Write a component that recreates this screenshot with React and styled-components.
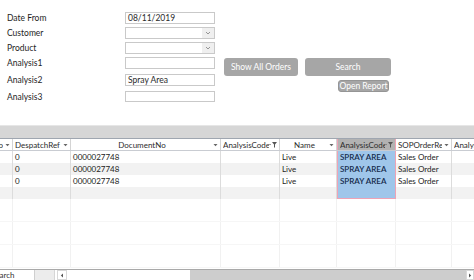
import React from "react";
import styled, { createGlobalStyle, css } from "styled-components";

const GlobalStyle = createGlobalStyle`
  html, body { margin: 0; padding: 0; background: #ffffff; }
  body { font-family: Lato, "Liberation Sans", sans-serif; }
  * { box-sizing: border-box; }
`;

const Page = styled.div`
  width: 474px;
  height: 280px;
  overflow: hidden;
  display: flex;
  flex-direction: column;
  background: #fff;
`;

const Form = styled.div`
  display: flex;
  height: 125px;
  padding: 12px 0 0 7px;
  flex: none;
`;

const FieldGrid = styled.div`
  display: grid;
  grid-template-columns: 118px 90px;
  grid-template-rows: 15px 15px 15px 17px 17px 12px;
  align-items: start;
`;

const Label = styled.div`
  font-size: 8.5px;
  line-height: 12px;
  color: #1e1e1e;
  white-space: nowrap;
`;

const Input = styled.div`
  height: ${(p) => (p.$short ? 11 : 12)}px;
  border: 1px solid #c9c9c9;
  background: #fff;
  display: flex;
  align-items: center;
  font-size: 8.5px;
  color: #2a2a2a;
  padding-left: 2px;
`;

const Combo = styled(Input)`
  padding-left: 0;
  justify-content: flex-end;
`;

const ComboArrow = styled.div`
  width: 12px;
  height: 100%;
  background: #efefef;
  display: flex;
  align-items: center;
  justify-content: center;
`;

const ButtonPanel = styled.div`
  margin-left: 9px;
  padding-top: 46px;
  display: flex;
  flex-direction: column;
  align-items: flex-end;
  gap: 4px;
`;

const ButtonRow = styled.div`
  display: flex;
  gap: 7px;
`;

const Button = styled.div`
  width: ${(p) => p.$w}px;
  height: ${(p) => p.$h}px;
  background: #a6a6a6;
  border-radius: 3px;
  color: #fff;
  font-size: ${(p) => p.$fs || 8.5}px;
  display: flex;
  align-items: center;
  justify-content: center;
  white-space: nowrap;
  overflow: hidden;
  ${(p) =>
    p.$outlined &&
    css`
      border: 1px solid #959595;
      margin-right: 2px;
    `}
`;

const Sheet = styled.div`
  flex: 1;
  display: flex;
  flex-direction: column;
  min-height: 0;
`;

const Band = styled.div`
  height: 13px;
  background: #d6d6d6;
  border-top: 1px solid #e6e6e6;
  flex: none;
`;

const Row = styled.div`
  display: flex;
  flex: none;
  height: ${(p) => p.$h || 12}px;
  background: ${(p) => (p.$alt ? "#f2f2f2" : "#ffffff")};
`;

const HeaderRow = styled(Row)`
  height: 13px;
  background: #fff;
  border-top: 1px solid #9fa6b0;
  border-bottom: 1px solid #c9ccd2;
`;

const HeadCell = styled.div`
  width: ${(p) => p.$w}px;
  flex: none;
  display: flex;
  align-items: center;
  justify-content: ${(p) => (p.$end ? "flex-end" : "flex-start")};
  overflow: hidden;
  padding: 0 2px 0 2px;
  border-right: 1px solid #d4d4d4;
  font-size: 8px;
  color: #2c2c2c;
  ${(p) =>
    p.$sel &&
    css`
      background: #b2b2b2;
      border-left: 1px solid #eea3b5;
      border-right: 1px solid #eea3b5;
    `}
`;

const HeadText = styled.span`
  white-space: nowrap;
  overflow: hidden;
  flex: ${(p) => (p.$end ? "none" : "1")};
  min-width: 0;
  text-align: ${(p) => (p.$center ? "center" : "left")};
`;

const Cell = styled.div`
  width: ${(p) => p.$w}px;
  flex: none;
  overflow: hidden;
  white-space: nowrap;
  padding-left: 2px;
  font-size: 8px;
  line-height: 12px;
  color: #222;
  border-right: 1px solid ${(p) => (p.$faint ? "#f1f1f1" : "#dcdcdc")};
  ${(p) =>
    p.$sel &&
    css`
      background: #9fc6ea;
      color: #142a4a;
      border-left: 1px solid #eea3b5;
      border-right: 1px solid #eea3b5;
      font-weight: 600;
    `}
  ${(p) =>
    p.$selLast &&
    css`
      border-bottom: 1px solid #eea3b5;
    `}
`;

const Filler = styled.div`
  flex: 1;
  display: flex;
  flex-direction: column;
`;

const FillerRow = styled(Row)`
  border-bottom: 1px solid #f6f6f6;
  height: 23px;
`;

const BottomBar = styled.div`
  height: 11px;
  flex: none;
  border-top: 1px solid #a9a9a9;
  display: flex;
  align-items: stretch;
  background: #fff;
`;

const SearchBox = styled.div`
  width: 35px;
  overflow: hidden;
  font-size: 8px;
  line-height: 10px;
  color: #333;
  border-right: 1px solid #cfcfcf;
  white-space: nowrap;
`;

const SearchText = styled.span`
  display: inline-block;
  margin-left: -9px;
`;

const GrayBox = styled.div`
  width: 20px;
  background: #ececec;
  border-right: 1px solid #d6d6d6;
`;

const Scroll = styled.div`
  flex: 1;
  display: flex;
  margin-left: 2px;
  background: #cdcdcd;
`;

const ScrollBtn = styled.div`
  width: ${(p) => p.$w || 10}px;
  background: #fff;
  border: 1px solid #d8d8d8;
  display: flex;
  align-items: center;
  justify-content: center;
  flex: none;
`;

const Thumb = styled.div`
  width: 123px;
  background: #fff;
  flex: none;
`;

const Track = styled.div`
  flex: 1;
`;

const Arrow = () => (
  <svg width="5" height="4" viewBox="0 0 5 4" style={{ flex: "none", marginLeft: 2 }}>
    <path d="M0.5 1 L4.5 1 L2.5 3.2 Z" fill="#666" />
  </svg>
);

const FilterIcon = () => (
  <svg width="8" height="7" viewBox="0 0 8 7" style={{ flex: "none" }}>
    <path d="M0 3 L2 3 L1 4.2 Z" fill="#666" />
    <path d="M3 1 L8 1 L6 3.6 L6 6.2 L5 6.8 L5 3.6 Z" fill="#555" />
  </svg>
);

const SmallChevron = () => (
  <svg width="6" height="4" viewBox="0 0 6 4">
    <path d="M1 1 L3 3 L5 1" stroke="#8a8a8a" strokeWidth="0.9" fill="none" />
  </svg>
);

const Tri = ({ dir }) => (
  <svg width="4" height="5" viewBox="0 0 4 5">
    {dir === "left" ? (
      <path d="M3 0.5 L3 4.5 L0.8 2.5 Z" fill="#555" />
    ) : (
      <path d="M1 0.5 L1 4.5 L3.2 2.5 Z" fill="#555" />
    )}
  </svg>
);

const columns = [
  { w: 13, head: "No", end: true, icon: "arrow" },
  { w: 58, head: "DespatchRef", icon: "arrow" },
  { w: 150, head: "DocumentNo", center: true, icon: "arrow" },
  { w: 59, head: "AnalysisCode1", icon: "filter" },
  { w: 57, head: "Name", center: true, icon: "arrow" },
  { w: 59, head: "AnalysisCode2", icon: "filter", sel: true },
  { w: 56, head: "SOPOrderRef", icon: "arrow" },
  { w: 40, head: "Analysis3", icon: "arrow" },
];

const dataRow = ["", "0", "0000027748", "", "Live", "SPRAY AREA", "Sales Order", ""];
const rows = [dataRow, dataRow, dataRow, ["", "", "", "", "", "", "", ""]];

const fields = [
  { label: "Date From", value: "08/11/2019" },
  { label: "Customer", combo: true },
  { label: "Product", combo: true },
  { label: "Analysis1" },
  { label: "Analysis2", value: "Spray Area" },
  { label: "Analysis3", short: true },
];

export default function App() {
  return (
    <>
      <GlobalStyle />
      <Page>
        <Form>
          <FieldGrid>
            {fields.map((f) => (
              <React.Fragment key={f.label}>
                <Label>{f.label}</Label>
                {f.combo ? (
                  <Combo>
                    <ComboArrow>
                      <SmallChevron />
                    </ComboArrow>
                  </Combo>
                ) : (
                  <Input $short={f.short}>{f.value || ""}</Input>
                )}
              </React.Fragment>
            ))}
          </FieldGrid>
          <ButtonPanel>
            <ButtonRow>
              <Button $w={74} $h={18}>Show All Orders</Button>
              <Button $w={86} $h={18}>Search</Button>
            </ButtonRow>
            <Button $w={51} $h={12} $fs={8.5} $outlined>Open Report</Button>
          </ButtonPanel>
        </Form>
        <Sheet>
          <Band />
          <HeaderRow>
            {columns.map((c) => (
              <HeadCell key={c.head} $w={c.w} $end={c.end} $sel={c.sel}>
                <HeadText $end={c.end} $center={c.center}>{c.head}</HeadText>
                {c.icon === "filter" ? <FilterIcon /> : <Arrow />}
              </HeadCell>
            ))}
          </HeaderRow>
          {rows.map((r, i) => (
            <Row key={i} $alt={i % 2 === 1}>
              {columns.map((c, j) => (
                <Cell key={j} $w={c.w} $sel={c.sel} $selLast={c.sel && i === rows.length - 1}>
                  {r[j]}
                </Cell>
              ))}
            </Row>
          ))}
          <Filler>
            {[0, 1, 2].map((k) => (
              <FillerRow key={k}>
                {columns.map((c, j) => (
                  <Cell key={j} $w={c.w} $faint />
                ))}
              </FillerRow>
            ))}
          </Filler>
          <BottomBar>
            <SearchBox>
              <SearchText>Search</SearchText>
            </SearchBox>
            <GrayBox />
            <Scroll>
              <ScrollBtn>
                <Tri dir="left" />
              </ScrollBtn>
              <Thumb />
              <Track />
              <ScrollBtn $w={8}>
                <Tri dir="right" />
              </ScrollBtn>
            </Scroll>
          </BottomBar>
        </Sheet>
      </Page>
    </>
  );
}
